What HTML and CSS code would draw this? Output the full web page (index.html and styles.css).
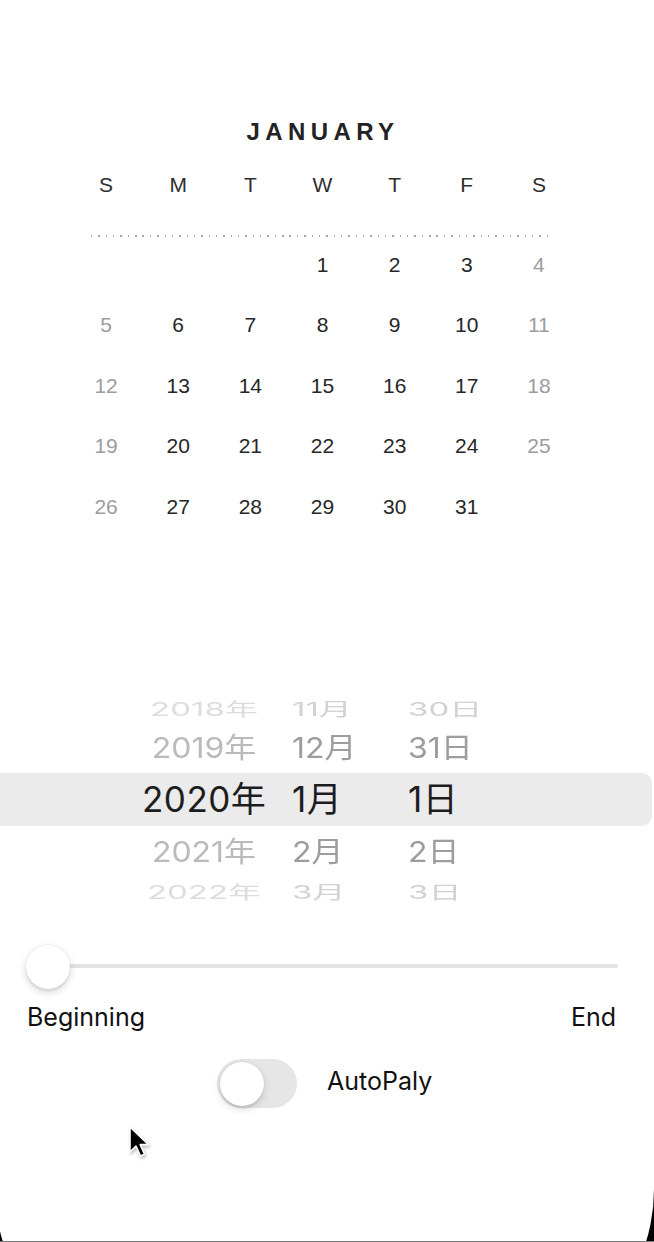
FILE: index.html
```html
<!DOCTYPE html>
<html lang="zh">
<head>
<meta charset="utf-8">
<title>Calendar</title>
<link rel="stylesheet" href="styles.css">
</head>
<body>
<div class="screen">
  <div class="page">
    <section class="cal">
      <h1 class="month">JANUARY</h1>
      <div class="weekdays">
        <span>S</span><span>M</span><span>T</span><span>W</span><span>T</span><span>F</span><span>S</span>
      </div>
      <div class="dots"></div>
      <div class="days">
        <span></span><span></span><span></span><span>1</span><span>2</span><span>3</span><span class="we">4</span>
        <span class="we">5</span><span>6</span><span>7</span><span>8</span><span>9</span><span>10</span><span class="we">11</span>
        <span class="we">12</span><span>13</span><span>14</span><span>15</span><span>16</span><span>17</span><span class="we">18</span>
        <span class="we">19</span><span>20</span><span>21</span><span>22</span><span>23</span><span>24</span><span class="we">25</span>
        <span class="we">26</span><span>27</span><span>28</span><span>29</span><span>30</span><span>31</span><span></span>
      </div>
    </section>

    <section class="picker">
      <div class="prow far top"><span class="y">2018年</span><span>11月</span><span>30日</span></div>
      <div class="prow near"><span class="y">2019年</span><span>12月</span><span>31日</span></div>
      <div class="prow sel"><span class="y">2020年</span><span>1月</span><span>1日</span></div>
      <div class="prow near"><span class="y">2021年</span><span>2月</span><span>2日</span></div>
      <div class="prow far bottom"><span class="y">2022年</span><span>3月</span><span>3日</span></div>
    </section>

    <section class="slider">
      <div class="track"></div>
      <div class="thumb"></div>
    </section>
    <div class="ends"><span>Beginning</span><span>End</span></div>

    <div class="auto">
      <div class="switch"><div class="knob"></div></div>
      <span class="auto-label">AutoPaly</span>
    </div>

    <svg class="cursor" width="24" height="36" viewBox="0 0 24 36" aria-hidden="true">
      <path d="M2 2 L2 27 L8 21 L12.5 31 L16.5 29.2 L12.2 19.6 L20.5 19.6 Z" fill="#000" stroke="#fff" stroke-width="1.6" stroke-linejoin="round"/>
    </svg>
  </div>
</div>
<div class="edge"></div>
</body>
</html>
```

FILE: styles.css
```css
html, body {
  margin: 0;
  padding: 0;
  height: 1242px;
  overflow: hidden;
  background: #000;
}

/* device screen with its large rounded lower corners */
.screen {
  width: 659.5px;
  height: 1369px;
  margin-left: -5.5px;
  padding-left: 5.5px;
  box-sizing: border-box;
  background: #fff;
  border-radius: 0 0 180px 180px;
  overflow: hidden;
}

.page {
  position: relative;
  width: 654px;
  padding-top: 118px;
}

/* ---------- calendar ---------- */
.cal {
  font-family: "Liberation Sans", Arial, sans-serif;
}

.month {
  margin: 0;
  height: 28px;
  line-height: 28px;
  font-size: 24px;
  font-weight: bold;
  letter-spacing: 5.4px;
  text-align: center;
  padding-right: 8px;
  color: #232323;
}

.weekdays,
.days {
  display: grid;
  grid-template-columns: repeat(7, 72.15px);
  margin-left: 70px;
  width: 505px;
  text-align: center;
}

.weekdays {
  margin-top: 27px;
  height: 24px;
  line-height: 24px;
  font-size: 21px;
  color: #2e2e2e;
}

.dots {
  margin: 38px 0 0 91px;
  width: 463px;
  height: 2px;
  background: repeating-linear-gradient(to right, #a6a6a6 0 1.4px, transparent 1.4px 7.35px);
}

.days {
  margin-top: -2.25px;
  grid-auto-rows: 60.5px;
  line-height: 60.5px;
  font-size: 21px;
  color: #262626;
}

.days .we {
  color: #9c9c9c;
}

/* ---------- date wheel ---------- */
.picker {
  margin-top: 152.75px;
  font-family: Inter, "Noto Sans CJK SC", sans-serif;
}

.prow {
  display: grid;
  grid-template-columns: 124px 90px 1fr;
  column-gap: 26px;
  padding-left: 142px;
  align-items: center;
  white-space: nowrap;
}

.prow .y {
  text-align: center;
}

.prow.far {
  height: 38px;
  font-size: 33px;
  line-height: 38px;
  color: #d2d2d2;
  transform: scaleY(0.55);
}

.prow.far.bottom {
  height: 40px;
  line-height: 40px;
}

.prow.far .y {
  color: #dddddd;
}

.prow.near {
  height: 40px;
  line-height: 40px;
  font-size: 32px;
  color: #9d9d9d;
  transform: scaleY(0.9);
}

.prow.near .y {
  color: #bababa;
}

.prow.sel {
  height: 53px;
  margin: 5px 2px 6px 0;
  line-height: 53px;
  font-size: 35px;
  color: #1d1d1d;
  background: #ebebeb;
  border-radius: 0 10px 10px 0;
}

.prow.sel span {
  letter-spacing: 0.5px;
}

/* ---------- slider ---------- */
.slider {
  position: relative;
  margin: 33px 0 0 26px;
  width: 592px;
  height: 44px;
}

.track {
  position: absolute;
  left: 0;
  right: 0;
  top: 19px;
  height: 4px;
  border-radius: 2px;
  background: #e3e3e3;
}

.thumb {
  position: absolute;
  left: 0;
  top: 0;
  width: 44px;
  height: 44px;
  border-radius: 50%;
  background: #fff;
  box-shadow: 0 0 0 0.5px rgba(0, 0, 0, 0.05), 0 3px 8px rgba(0, 0, 0, 0.16), 0 3px 1px rgba(0, 0, 0, 0.05);
}

.ends {
  display: flex;
  justify-content: space-between;
  margin-top: 13px;
  padding: 0 38px 0 27px;
  height: 30px;
  line-height: 30px;
  font-family: Inter, "Noto Sans CJK SC", sans-serif;
  font-size: 25px;
  color: #111;
}

/* ---------- autoplay toggle ---------- */
.auto {
  display: flex;
  align-items: center;
  gap: 30px;
  margin-top: 27px;
  padding-left: 217px;
  font-family: Inter, "Noto Sans CJK SC", sans-serif;
  font-size: 25px;
  color: #111;
}

.auto-label {
  line-height: 30px;
  padding-bottom: 6px;
}

.switch {
  width: 80px;
  height: 49px;
  border-radius: 25px;
  background: #e6e6e6;
  padding: 2.5px;
  box-sizing: border-box;
}

.knob {
  width: 44px;
  height: 44px;
  border-radius: 50%;
  background: #fff;
  box-shadow: 0 0 0 0.5px rgba(0, 0, 0, 0.05), 0 3px 8px rgba(0, 0, 0, 0.15), 0 3px 1px rgba(0, 0, 0, 0.06);
}

/* mouse pointer hovering over the page */
.cursor {
  position: absolute;
  left: 128px;
  top: 1125px;
  filter: drop-shadow(1px 2px 1.5px rgba(0, 0, 0, 0.25));
}

/* thin bottom rim of the frame */
.edge {
  position: fixed;
  left: 0;
  right: 0;
  bottom: 0;
  height: 1px;
  background: #7a7a7a;
}
```
